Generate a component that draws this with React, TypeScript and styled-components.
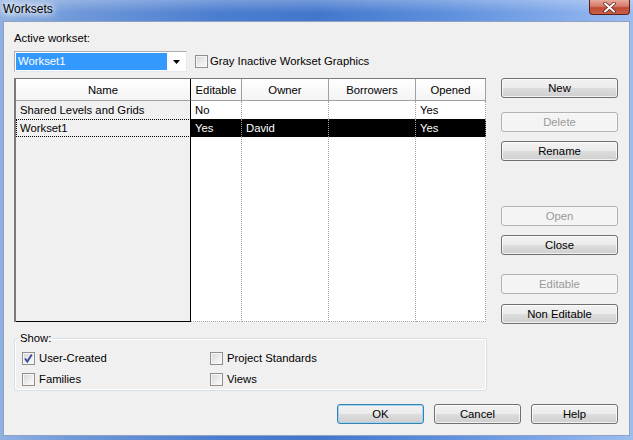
import React from 'react'
import styled, { createGlobalStyle } from 'styled-components'

const GlobalStyle = createGlobalStyle`
  html, body {
    margin: 0;
    padding: 0;
    background: #fff;
  }
  body {
    font-family: 'Liberation Sans', Arial, sans-serif;
    font-size: 11.3px;
    color: #000;
  }
`

const Window = styled.div`
  width: 633px;
  height: 440px;
  box-sizing: border-box;
  display: flex;
  flex-direction: column;
  padding: 0 3px 4px 3px;
  background: linear-gradient(
    90deg,
    #8fb1e2 0%,
    #6f98d9 12%,
    #4b7dcf 35%,
    #4477cc 50%,
    #5d8fdc 70%,
    #85aceb 90%,
    #9dbdf0 100%
  );
`

const TitleBar = styled.div`
  height: 21px;
  display: flex;
  align-items: flex-start;
  background: linear-gradient(rgba(255, 255, 255, 0.25), rgba(255, 255, 255, 0) 60%);
  margin: 0 -3px;
  padding: 0 3px;
`

const Title = styled.div`
  padding-top: 2px;
  font-size: 12px;
  line-height: 15px;
  color: #000;
  text-shadow: 0 0 6px #fff, 0 0 8px #fff, 0 0 10px #fff;
`

const CloseButton = styled.div`
  margin-left: auto;
  width: 41px;
  height: 15px;
  box-sizing: border-box;
  border: 1px solid #5a2019;
  border-top: none;
  border-radius: 0 0 4px 4px;
  background: linear-gradient(#e8a99c 0%, #d47a68 45%, #c04a33 55%, #c8604a 100%);
  display: flex;
  align-items: center;
  justify-content: center;
`

const Body = styled.div`
  flex: 1;
  display: flex;
  flex-direction: column;
  border: 1px solid #8ea3c4;
  background: #f0f0f0;
  padding: 9px 11px 0 10px;
`

const Label = styled.div`
  line-height: 15px;
`

const TopRow = styled.div`
  display: flex;
  align-items: center;
  margin-top: 5px;
  height: 21px;
`

const Combo = styled.div`
  width: 173px;
  height: 21px;
  box-sizing: border-box;
  border: 1px solid #abadb3;
  border-right-color: #e3e9ef;
  border-bottom-color: #e3e9ef;
  background: #fff;
  display: flex;
  align-items: center;
  padding: 1px;
`

const ComboValue = styled.div`
  width: 151px;
  height: 17px;
  background: #3399ff;
  color: #fff;
  line-height: 17px;
  padding-left: 2px;
  box-sizing: border-box;
`

const ComboArrow = styled.div`
  flex: 1;
  display: flex;
  justify-content: center;
  align-items: center;
`

const CheckRow = styled.label<{ $gap?: number; $indent?: number }>`
  display: flex;
  align-items: center;
  gap: ${({ $gap }) => $gap ?? 4}px;
  margin-left: ${({ $indent }) => $indent ?? 0}px;
  line-height: 15px;
`

const Box = styled.span`
  width: 13px;
  height: 13px;
  box-sizing: border-box;
  border: 1px solid #8f8f8f;
  background: linear-gradient(135deg, #d6d6d6 0%, #eeeeee 60%, #fbfbfb 100%);
  box-shadow: inset 0 0 0 1px #f6f6f6;
  display: inline-flex;
  align-items: center;
  justify-content: center;
`

const MainRow = styled.div`
  display: flex;
  gap: 15px;
  margin-top: 6px;
  height: 246px;
`

const Table = styled.div`
  width: 472px;
  height: 244px;
  box-sizing: border-box;
  border-top: 1px solid #7a7a7a;
  border-left: 2px solid #7a7a7a;
  background: #fff;
  display: grid;
  grid-template-columns: 175px 51px 87px 87px 70px;
  grid-template-rows: 22px 18px 18px 1fr;
`

const HeadCell = styled.div<{ $name?: boolean }>`
  box-sizing: border-box;
  border-right: 1px solid ${({ $name }) => ($name ? '#000' : '#a0a0a0')};
  border-bottom: 1px solid #a0a0a0;
  background: linear-gradient(#ffffff, #f4f4f4);
  display: flex;
  align-items: center;
  justify-content: center;
`

const NameCell = styled.div<{ $focus?: boolean }>`
  box-sizing: border-box;
  background: #f0f0f0;
  border-right: 1px solid #000;
  display: flex;
  align-items: center;
  padding-left: 4px;
  ${({ $focus }) =>
    $focus &&
    `
    outline: 1px dotted #000;
    outline-offset: -1px;
  `}
`

const Cell = styled.div<{ $selected?: boolean }>`
  box-sizing: border-box;
  border-right: 1px dotted #a0a0a0;
  background: ${({ $selected }) => ($selected ? '#000' : '#fff')};
  color: ${({ $selected }) => ($selected ? '#fff' : '#000')};
  display: flex;
  align-items: center;
  padding-left: 4px;
`

const NameFill = styled.div`
  background: #f0f0f0;
  border-right: 1px solid #000;
  border-bottom: 1px solid #000;
`

const Fill = styled.div`
  border-right: 1px dotted #a0a0a0;
  border-bottom: 1px dotted #a0a0a0;
`

const ButtonColumn = styled.div`
  width: 117px;
  display: flex;
  flex-direction: column;
`

const Button = styled.button<{ $disabled?: boolean; $primary?: boolean; $top?: number; $width?: number }>`
  width: ${({ $width }) => $width ?? 117}px;
  height: 20px;
  margin-top: ${({ $top }) => $top ?? 0}px;
  box-sizing: border-box;
  padding: 0;
  font-family: inherit;
  font-size: 11.3px;
  border-radius: 3px;
  border: 1px solid ${({ $disabled, $primary }) => ($disabled ? '#adb2b5' : $primary ? '#3c7fb1' : '#707070')};
  color: ${({ $disabled }) => ($disabled ? '#9a9a9a' : '#000')};
  background: ${({ $disabled }) =>
    $disabled ? '#f4f4f4' : 'linear-gradient(#f2f2f2 0%, #ebebeb 50%, #dddddd 50%, #cfcfcf 100%)'};
  box-shadow: inset 0 0 0 1px ${({ $disabled, $primary }) =>
    $disabled ? '#f8f8f8' : $primary ? '#98d6f1' : 'rgba(255, 255, 255, 0.7)'};
`

const Group = styled.fieldset`
  width: 473px;
  height: 59px;
  box-sizing: border-box;
  margin: 8px 0 0 0;
  padding: 3px 0 0 7px;
  border: 1px solid #d5dfe5;
  border-radius: 3px;
  box-shadow: inset 0 0 0 1px #fff;
  display: grid;
  grid-template-columns: 188px 1fr;
  grid-auto-rows: 21px;
  align-items: center;
`

const Legend = styled.legend`
  padding: 0 1px;
  margin-left: -3px;
  line-height: 13px;
`

const Footer = styled.div`
  display: flex;
  justify-content: flex-end;
  gap: 10px;
  margin-top: 13px;
`

const Check = ({ checked }: { checked?: boolean }) => (
  <Box>
    {checked && (
      <svg width="11" height="11" viewBox="0 0 11 11">
        <path d="M2 5.5 L4.3 8.6 L8.8 1.6" fill="none" stroke="#3c4c9c" strokeWidth="1.9" />
      </svg>
    )}
  </Box>
)

const ROWS = [
  { name: 'Shared Levels and Grids', editable: 'No', owner: '', borrowers: '', opened: 'Yes', selected: false },
  { name: 'Workset1', editable: 'Yes', owner: 'David', borrowers: '', opened: 'Yes', selected: true },
]

const HEADERS = ['Name', 'Editable', 'Owner', 'Borrowers', 'Opened']

export default function App() {
  return (
    <>
      <GlobalStyle />
      <Window>
        <TitleBar>
          <Title>Worksets</Title>
          <CloseButton>
            <svg width="13" height="11" viewBox="0 0 13 11">
              <path d="M2 1.5 L11 9.5 M11 1.5 L2 9.5" stroke="#5a1e14" strokeWidth="3.4" strokeLinecap="round" />
              <path d="M2 1.5 L11 9.5 M11 1.5 L2 9.5" stroke="#fff" strokeWidth="2" strokeLinecap="round" />
            </svg>
          </CloseButton>
        </TitleBar>
        <Body>
          <Label>Active workset:</Label>
          <TopRow>
            <Combo>
              <ComboValue>Workset1</ComboValue>
              <ComboArrow>
                <svg width="7" height="4" viewBox="0 0 7 4">
                  <path d="M0 0 H7 L3.5 4 Z" fill="#000" />
                </svg>
              </ComboArrow>
            </Combo>
            <CheckRow $gap={2} $indent={8}>
              <Check />
              Gray Inactive Workset Graphics
            </CheckRow>
          </TopRow>
          <MainRow>
            <Table>
              {HEADERS.map((h, i) => (
                <HeadCell key={h} $name={i === 0}>
                  {h}
                </HeadCell>
              ))}
              {ROWS.map((r) => (
                <React.Fragment key={r.name}>
                  <NameCell $focus={r.selected}>{r.name}</NameCell>
                  <Cell $selected={r.selected}>{r.editable}</Cell>
                  <Cell $selected={r.selected}>{r.owner}</Cell>
                  <Cell $selected={r.selected}>{r.borrowers}</Cell>
                  <Cell $selected={r.selected}>{r.opened}</Cell>
                </React.Fragment>
              ))}
              <NameFill />
              <Fill />
              <Fill />
              <Fill />
              <Fill />
            </Table>
            <ButtonColumn>
              <Button>New</Button>
              <Button $disabled $top={14}>Delete</Button>
              <Button $top={9}>Rename</Button>
              <Button $disabled $top={45}>Open</Button>
              <Button $top={9}>Close</Button>
              <Button $disabled $top={19}>Editable</Button>
              <Button $top={10}>Non Editable</Button>
            </ButtonColumn>
          </MainRow>
          <Group>
            <Legend>Show:</Legend>
            <CheckRow>
              <Check checked />
              User-Created
            </CheckRow>
            <CheckRow>
              <Check />
              Project Standards
            </CheckRow>
            <CheckRow>
              <Check />
              Families
            </CheckRow>
            <CheckRow>
              <Check />
              Views
            </CheckRow>
          </Group>
          <Footer>
            <Button $primary $width={87}>OK</Button>
            <Button $width={87}>Cancel</Button>
            <Button $width={87}>Help</Button>
          </Footer>
        </Body>
      </Window>
    </>
  )
}
